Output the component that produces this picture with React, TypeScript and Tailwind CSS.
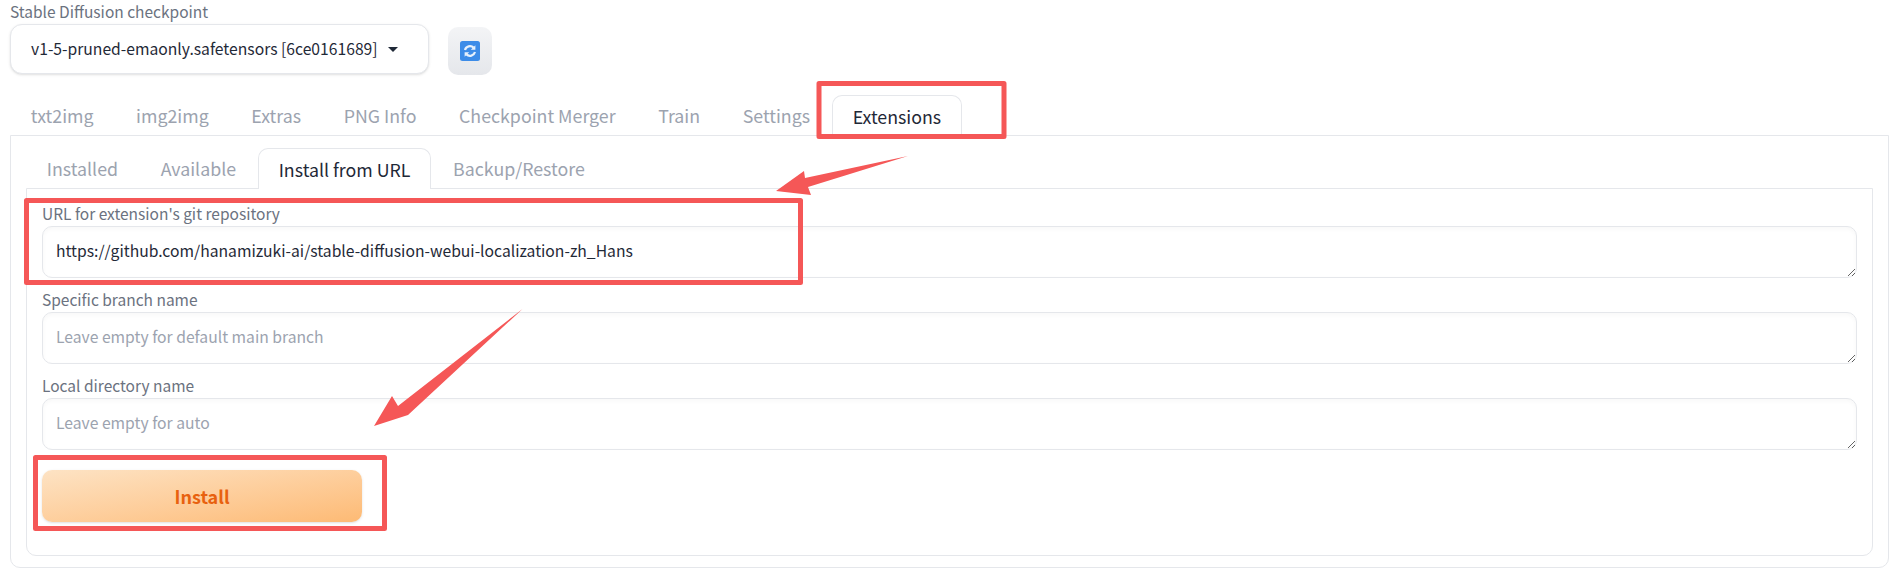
const topTabs = ["txt2img", "img2img", "Extras", "PNG Info", "Checkpoint Merger", "Train", "Settings", "Extensions"];
const subTabs = ["Installed", "Available", "Install from URL", "Backup/Restore"];

function TabRow({ tabs, active }: { tabs: string[]; active: string }) {
  return (
    <div className="flex h-[40px] gap-[1px]">
      {tabs.map((tab) => (
        <button
          key={tab}
          className={
            tab === active
              ? "relative z-10 -mb-[1px] h-[41px] rounded-t-[10px] border border-b-0 border-[#e5e7eb] bg-white px-[19.8px] text-[17.8px] text-[#1f2937]"
              : "h-[40px] border border-transparent px-[19.8px] text-[17.8px] text-[#9ca3af]"
          }
        >
          {tab}
        </button>
      ))}
    </div>
  );
}

function Field({ label, value, placeholder }: { label: string; value?: string; placeholder?: string }) {
  return (
    <label className="block">
      <span className="block h-[22px] text-[15.5px] leading-[18px] text-[#6b7280]">{label}</span>
      <textarea
        readOnly
        value={value}
        placeholder={placeholder}
        className="block h-[52px] w-full resize-y rounded-[10px] border border-[#e5e7eb] bg-white px-[13px] py-[12px] text-[15.7px] leading-[24px] text-[#1f2937] shadow-[inset_0_2px_4px_rgba(0,0,0,0.03)] outline-none placeholder:text-[#9ca3af]"
      />
    </label>
  );
}

function RefreshIcon() {
  return (
    <svg width="20" height="20" viewBox="0 0 20 20">
      <rect width="20" height="20" rx="2.5" fill="#3d8ce8" />
      <path d="M5 9a5.2 5.2 0 0 1 8.6-2.4" fill="none" stroke="#e8f1fc" strokeWidth="2.2" />
      <path d="M15.4 4.2v4.6h-4.6z" fill="#e8f1fc" />
      <path d="M15 11a5.2 5.2 0 0 1-8.6 2.4" fill="none" stroke="#e8f1fc" strokeWidth="2.2" />
      <path d="M4.6 15.8v-4.6h4.6z" fill="#e8f1fc" />
    </svg>
  );
}

// red markup drawn on top of the screenshot
function Annotations() {
  return (
    <svg className="pointer-events-none absolute left-0 top-0 z-20" width="1904" height="580">
      <g fill="none" stroke="#f55757" strokeWidth="5" strokeLinejoin="round">
        <rect x="819" y="83.5" width="185" height="53" />
        <rect x="26.5" y="200.5" width="774" height="82" />
        <rect x="35.5" y="457.5" width="349" height="71" />
      </g>
      <g fill="#f55757">
        <polygon points="908,156 808,187 811,195 776,191 804,171 805,178" />
        <polygon points="522.5,309 408,415 374,426 392,396 398,406" />
      </g>
    </svg>
  );
}

export default function App() {
  return (
    <div className="relative h-[580px] w-[1904px] overflow-hidden bg-white pl-[10px] pr-[15px] font-['Noto_Sans_CJK_SC','Liberation_Sans',sans-serif]">
      <Annotations />

      {/* checkpoint */}
      <div className="flex h-[95px] items-start gap-[19px]">
        <div className="w-[419px]">
          <div className="h-[24px] text-[15.5px] leading-[22px] text-[#6b7280]">Stable Diffusion checkpoint</div>
          <div className="flex h-[50px] items-center justify-between rounded-[12px] border border-[#e5e7eb] bg-white pl-[20px] pr-[30px] text-[15.7px] text-[#1f2937] shadow-sm">
            <span>v1-5-pruned-emaonly.safetensors [6ce0161689]</span>
            <span className="h-0 w-0 border-x-[5px] border-t-[5px] border-x-transparent border-t-[#1f2937]" />
          </div>
        </div>
        <button className="mt-[27px] flex h-[48px] w-[44px] items-center justify-center rounded-[10px] bg-gradient-to-b from-[#f3f4f6] to-[#e5e7eb]">
          <RefreshIcon />
        </button>
      </div>

      <TabRow tabs={topTabs} active="Extensions" />

      {/* extensions panel */}
      <div className="h-[433px] rounded-b-[10px] border border-[#e5e7eb] px-[15px] pt-[12px]">
        <TabRow tabs={subTabs} active="Install from URL" />
        <div className="h-[368px] rounded-b-[10px] border border-[#e5e7eb] px-[15px] pt-[15px]">
          <div className="flex flex-col gap-[12px]">
            <Field label="URL for extension's git repository" value="https://github.com/hanamizuki-ai/stable-diffusion-webui-localization-zh_Hans" />
            <Field label="Specific branch name" placeholder="Leave empty for default main branch" />
            <Field label="Local directory name" placeholder="Leave empty for auto" />
          </div>
          <button className="mt-[20px] h-[52px] w-[320px] rounded-[10px] bg-gradient-to-br from-[#fde3c4] to-[#fdba74] text-[18px] font-semibold text-[#e8610f] shadow-sm">
            Install
          </button>
        </div>
      </div>
    </div>
  );
}
